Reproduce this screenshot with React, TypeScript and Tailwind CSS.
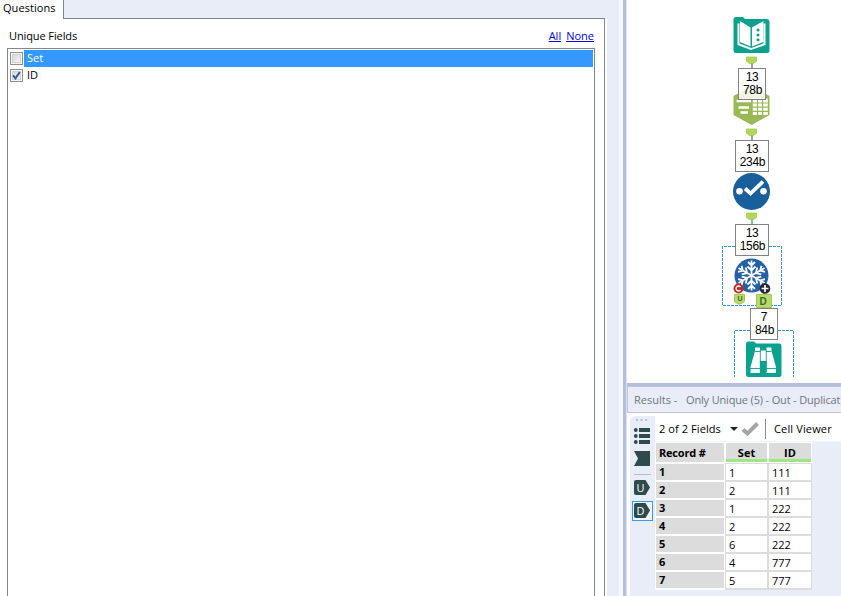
import type { ReactNode } from 'react'

const fields = [
  { name: 'Set', checked: false, selected: true },
  { name: 'ID', checked: true, selected: false },
]

const records = [
  { set: '1', id: '111' },
  { set: '2', id: '111' },
  { set: '1', id: '222' },
  { set: '2', id: '222' },
  { set: '6', id: '222' },
  { set: '4', id: '777' },
  { set: '5', id: '777' },
]

// Record count and size shown on each connection
const counters = [
  { count: '13', size: '78b', pos: 'left-[111px] top-[68px] w-[28px]' },
  { count: '13', size: '234b', pos: 'left-[108px] top-[140px] w-[34px]' },
  { count: '13', size: '156b', pos: 'left-[108px] top-[224px] w-[34px]' },
  { count: '7', size: '84b', pos: 'left-[123px] top-[308px] w-[28px]' },
]

function Checkbox({ checked }: { checked: boolean }) {
  return (
    <span className="ml-[2px] mr-[1px] flex h-[13px] w-[13px] shrink-0 items-center justify-center border border-[#8e8f8f] bg-[#f4f4f4] p-px">
      <span className="flex h-full w-full items-center justify-center border border-[#cfd2d6] bg-gradient-to-br from-[#d5d8dc] to-[#f6f6f6]">
        {checked && (
          <svg viewBox="0 0 9 9" className="h-[9px] w-[9px] shrink-0">
            <path d="M1 4.3 3.5 7.3 7.8 1" fill="none" stroke="#3b5795" strokeWidth="2" />
          </svg>
        )}
      </span>
    </span>
  )
}

function Questions() {
  return (
    <section className="flex w-[607px] shrink-0 flex-col">
      <div className="flex h-[19px] shrink-0">
        <div className="w-[64px] border-r border-[#828790] bg-white pl-[3px] leading-[16px]">
          <span className="tracking-[0.06px]">Questions</span>
        </div>
        <div className="w-[541px] border-b border-[#828790]"></div>
      </div>
      <div className="mr-[2px] flex grow flex-col border-r border-[#828790] bg-white pl-[7px] shadow-[2px_0_0_#fff]">
        <div className="flex h-[29px] shrink-0 items-center pl-[2px] pr-[10px] pt-[4px]">
          <span className="grow tracking-[-0.1px]">Unique Fields</span>
          <a className="mr-[5px] text-[#0000e6] underline">All</a>
          <a className="text-[#0000e6] underline">None</a>
        </div>
        <ul className="mr-[9px] grow border-l border-r border-t border-[#828790] pt-px">
          {fields.map((field) => (
            <li key={field.name} className="flex h-[17px] items-center">
              <Checkbox checked={field.checked} />
              <span
                className={
                  field.selected
                    ? 'mr-px h-[17px] grow bg-[#3399ff] pl-[3px] leading-[16px] text-white'
                    : 'h-[17px] grow pl-[3px] leading-[16px]'
                }
              >
                {field.name}
              </span>
            </li>
          ))}
        </ul>
      </div>
    </section>
  )
}

function Anchor({ x, y }: { x: number; y: number }) {
  return <path d={`M${x - 5} ${y}h10v4.500l-3 2h-4l-3-2z`} fill="#b0d957" stroke="#a0c44f" strokeWidth="0.7" />
}

function CanvasDrawing() {
  return (
    <svg viewBox="0 0 214 377" className="absolute left-0 top-0 h-[377px] w-[214px]">
      {/* connections */}
      <path d="M125 63v5M125 135v5" stroke="#777" strokeWidth="1.3" />
      <path d="M125 219v5" stroke="#35a077" strokeWidth="1.3" />
      <Anchor x={124.5} y={57} />
      <Anchor x={124.5} y={129} />
      <Anchor x={124.5} y={213} />

      {/* input */}
      <path d="M106.500 19.500q0-2.500 2.500-2.500h7l2 2h21.500q3 0 3 3v28.500q0 2.500-2.500 2.500h-31q-2.500 0-2.500-2.500z" fill="#0aa18f" />
      <path d="M110.500 23.500V45l13.500 5 14.500-5V23.500" fill="#fff" />
      <path d="M112.500 21v22.500l11.700 4.500 12.300-4.500V21" fill="#0aa18f" />
      <path d="M113 21l10.500 6.500v19L113 42z" fill="#fff" />
      <path d="M136.500 21L125 27.500v19l11.500-4.500z" fill="#fff" />
      <g fill="#0aa18f">
        <circle cx="131" cy="30" r="1.500" />
        <circle cx="131" cy="35" r="1.500" />
        <circle cx="131" cy="39.800" r="1.500" />
      </g>

      {/* select */}
      <path d="M124.500 86l18 10v19l-18 10-18-10V96z" fill="#98b954" />
      <path d="M109.500 101h14.500M111.500 107.500h10.500M113.500 112.500h7.500" stroke="#fff" strokeWidth="2.300" />
      <path d="M125.800 98.500h15V115h-15z" fill="#fff" />
      <path d="M125.500 103h15.500M125.500 107.200h15.500M125.500 111.400h15.500M130.500 98.500V115M135.600 98.500V115" stroke="#98b954" strokeWidth="1.200" />

      {/* unique */}
      <circle cx="124.500" cy="191.500" r="18.500" fill="#195f9c" />
      <circle cx="112.500" cy="191.300" r="3.300" fill="#fff" />
      <circle cx="136.500" cy="191.300" r="3.300" fill="#fff" />
      <path d="M118 188.500l5.500 5 12.500-12" fill="none" stroke="#fff" strokeWidth="3.800" />

      {/* snowflake macro */}
      <circle cx="124.500" cy="275.500" r="17" fill="#2460a7" />
      <g stroke="#fff" strokeWidth="1.800" fill="none">
        {[0, 60, 120, 180, 240, 300].map((angle) => (
          <path
            key={angle}
            d="M124.500 275.500V260.500M121 262l3.500 3.500 3.500-3.500M120.500 266.500l4 4 4-4"
            transform={`rotate(${angle} 124.500 275.500)`}
          />
        ))}
      </g>
      <circle cx="111.500" cy="288.500" r="5" fill="#c52a20" />
      <path d="M113.500 286.900a2.500 2.500 0 1 0 0 3.200" fill="none" stroke="#fff" strokeWidth="1.400" />
      <circle cx="138" cy="288.500" r="5.300" fill="#24262c" />
      <path d="M134.500 288.500h7M138 285v7" stroke="#fff" strokeWidth="1.700" />
      <path d="M107.500 294.500h10v7l-3.500 2.500h-3l-3.500-2.500z" fill="#b7dc68" stroke="#a3c45c" />
      <path d="M129.500 294.500h15v13h-15z" fill="#b7dc68" stroke="#a3c45c" />

      {/* browse */}
      <path d="M119 344q0-2.500 2.500-2.500h5.500l2 2h23q2.500 0 2.500 2.500V374.500q0 2.500-2.500 2.500h-30.500q-2.500 0-2.500-2.500z" fill="#0aa18f" />
      <path d="M128 347.500h5v3h6.500v-3h5v3.500l4.500 16v6h-9.500v-12h-6.500v12h-9.500v-6l4.500-16z" fill="#fff" />
      <path d="M133.300 350v22M139.300 350v22M128 351.500h5.500M139 351.500h5.500M123 368.500h10M139.500 368.500h10" stroke="#0aa18f" strokeWidth="0.900" />

      {/* selection frames */}
      <path d="M108 246.500H95.500v59H129M142 246.500h12.500v59H145" fill="none" stroke="#3292e5" strokeDasharray="3 1" />
      <path d="M123 330.500h-15.500V377M151 330.500h15.500V377" fill="none" stroke="#3292e5" strokeDasharray="3 1" />
    </svg>
  )
}

function Workflow() {
  return (
    <div className="relative h-[383px] shrink-0 overflow-hidden bg-white font-['Liberation_Sans',sans-serif]">
      <CanvasDrawing />
      {counters.map((counter) => (
        <div
          key={counter.pos}
          className={`absolute h-[32px] border border-[#828282] bg-white/85 pt-[2px] text-center text-[12px] leading-[13px] tracking-[-0.3px] whitespace-nowrap ${counter.pos}`}
        >
          <div>{counter.count}</div>
          <div className="pl-px">{counter.size}</div>
        </div>
      ))}
      <span className="absolute left-[108px] top-[294px] w-[10px] text-center text-[7px] font-bold leading-[9px] text-[#40682e]">U</span>
      <span className="absolute left-[129px] top-[295px] w-[14px] text-center text-[10px] font-bold leading-[13px] text-[#40682e]">D</span>
    </div>
  )
}

function OutputTag({ children }: { children: ReactNode }) {
  return (
    <span className="relative flex h-[15px] w-[16px] items-center">
      <svg viewBox="0 0 16 15" className="absolute inset-0 h-[15px] w-[16px]">
        <path d="M2 0h9.500L16 7.500 11.500 15H2q-2 0-2-2V2q0-2 2-2z" fill="#2f4a4b" />
      </svg>
      <span className="relative w-[13px] text-center text-[11px] leading-[15px] text-white">{children}</span>
    </span>
  )
}

function ResultsToolbar() {
  return (
    <div className="ml-[3px] mt-[3px] flex w-[25px] shrink-0 flex-col rounded-tl-[5px] bg-[#e9edf8]">
      <svg viewBox="0 0 25 60" className="h-[60px] w-[25px] shrink-0">
        <path d="M6 4h2M10.500 4h2M15 4h2" stroke="#aeb0b8" strokeWidth="1.500" />
        <g fill="#2f4a4b">
          <circle cx="5.800" cy="14" r="1.900" />
          <circle cx="5.800" cy="20" r="1.900" />
          <circle cx="5.800" cy="26" r="1.900" />
          <path d="M9 12h11v4H9zM9 18h11v4H9zM9 24h11v4H9zM4 35h16v15H4l4-7.500z" />
        </g>
        <path d="M4 58.500h17" stroke="#b9bbc1" />
      </svg>
      <div className="mt-[4px] pl-[4px]">
        <OutputTag>U</OutputTag>
      </div>
      <div className="mt-[6px] ml-[2px] flex h-[20px] w-[21px] shrink-0 items-center border border-[#3399ff] bg-[#f1f6fc] pb-px pl-px">
        <OutputTag>D</OutputTag>
      </div>
    </div>
  )
}

function Results() {
  return (
    <section className="flex grow flex-col border-t-[3px] border-[#b0bfdf] bg-white">
      <div className="flex h-[27px] shrink-0 items-center border border-r-0 border-[#c4c5ca] bg-[#e9edf8] pl-[6px] whitespace-pre text-[#73757a]">
        <span className="w-[52px] shrink-0">Results -</span>
        <span className="tracking-[-0.16px]">Only Unique (5) - Out - Duplicat</span>
      </div>
      <div className="flex grow">
        <ResultsToolbar />
        <div className="flex grow flex-col">
          <div className="flex h-[28px] shrink-0 items-center pl-[4px] pt-[3px] whitespace-nowrap">
            <span className="w-[71px] shrink-0 tracking-[0.08px]">2 of 2 Fields</span>
            <svg viewBox="0 0 30 14" className="h-[14px] w-[30px] shrink-0">
              <path d="M0 5h8l-4 4z" fill="#222" />
              <path d="M13 7.500l4.500 4L27.500 1.500" fill="none" stroke="#a5a5a5" strokeWidth="4" />
            </svg>
            <div className="ml-[5px] mr-[8px] h-[20px] w-px bg-[#8a8a8a]"></div>
            <span className="tracking-[0.14px]">Cell Viewer</span>
          </div>
          <div className="flex grow items-start border-t border-[#f0f4fb] bg-[#e9edf8]">
            <div className="w-[70px] border-l border-white bg-white pt-px font-bold">
              <div className="mb-[2px] mr-px h-[19px] bg-[#dcdcdc] pl-[3px] leading-[19px] tracking-[-0.2px]">Record #</div>
              {records.map((_, i) => (
                <div key={i} className="mb-[2px] mr-px h-[16px] bg-[#dcdcdc] pl-[3px] leading-[16px]">
                  {i + 1}
                </div>
              ))}
            </div>
            <div className="w-[87px] bg-white pt-px">
              <div className="flex h-[20px] gap-[2px] pl-px text-center font-bold leading-[19px]">
                <div className="h-[19px] w-[41px] border-b-[3px] border-[#9fe87f] bg-[#dcdcdc]">Set</div>
                <div className="h-[19px] w-[42px] border-b-[3px] border-[#9fe87f] bg-[#dcdcdc]">ID</div>
              </div>
              <div className="border-l border-r border-t border-[#dcdcdc]">
                {records.map((record, i) => (
                  <div key={i} className="flex h-[18px] border-b-2 border-[#dcdcdc] leading-[18px]">
                    <div className="w-[43px] border-r-2 border-[#dcdcdc] pl-[3px]">{record.set}</div>
                    <div className="pl-[3px]">{record.id}</div>
                  </div>
                ))}
              </div>
            </div>
          </div>
        </div>
      </div>
    </section>
  )
}

export default function App() {
  return (
    <main className="flex h-[596px] w-[841px] overflow-hidden bg-[#e9edf8] font-['Open_Sans',sans-serif] text-[11px] leading-[15px] text-black">
      <Questions />
      <div className="ml-[12px] w-[4px] shrink-0 bg-[#f6f8fd]"></div>
      <div className="w-[3px] shrink-0 bg-[#b0bfdf]"></div>
      <div className="flex w-[215px] shrink-0 flex-col border-l border-[#dfe1e8]">
        <Workflow />
        <Results />
      </div>
    </main>
  )
}
